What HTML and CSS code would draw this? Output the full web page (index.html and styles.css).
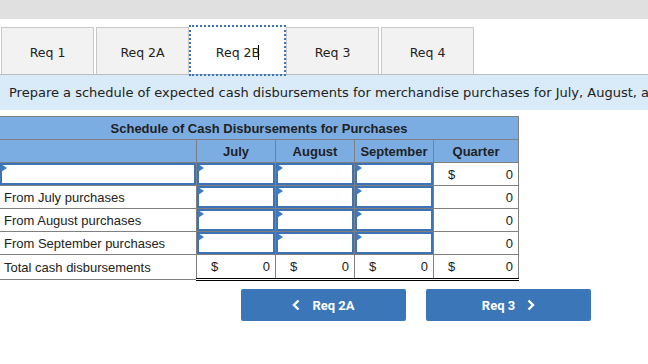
FILE: index.html
```html
<!DOCTYPE html>
<html>
<head>
<meta charset="utf-8">
<link rel="stylesheet" href="styles.css">
</head>
<body>
<div class="topbar"></div>
<div class="tabs">
  <div class="tab">Req 1</div>
  <div class="tab">Req 2A</div>
  <div class="tab active">Req 2B<span class="caret"></span></div>
  <div class="tab">Req 3</div>
  <div class="tab">Req 4</div>
</div>
<div class="band">Prepare a schedule of expected cash disbursements for merchandise purchases for July, August, and September, and for the quarter in total.</div>
<table class="sched">
  <colgroup>
    <col class="c-label"><col class="c-m"><col class="c-m"><col class="c-m"><col class="c-q">
  </colgroup>
  <tr class="hd"><th colspan="5">Schedule of Cash Disbursements for Purchases</th></tr>
  <tr class="hd"><th></th><th>July</th><th>August</th><th>September</th><th>Quarter</th></tr>
  <tr>
    <td class="inp"><div class="box"></div><span class="tri"></span></td>
    <td class="inp"><div class="box"></div><span class="tri"></span></td>
    <td class="inp"><div class="box"></div><span class="tri"></span></td>
    <td class="inp"><div class="box"></div><span class="tri"></span></td>
    <td class="val"><span class="dol">$</span><span class="num">0</span></td>
  </tr>
  <tr>
    <td class="lbl">From July purchases</td>
    <td class="inp"><div class="box"></div><span class="tri"></span></td>
    <td class="inp"><div class="box"></div><span class="tri"></span></td>
    <td class="inp"><div class="box"></div><span class="tri"></span></td>
    <td class="val"><span class="dol"></span><span class="num">0</span></td>
  </tr>
  <tr>
    <td class="lbl">From August purchases</td>
    <td class="inp"><div class="box"></div><span class="tri"></span></td>
    <td class="inp"><div class="box"></div><span class="tri"></span></td>
    <td class="inp"><div class="box"></div><span class="tri"></span></td>
    <td class="val"><span class="dol"></span><span class="num">0</span></td>
  </tr>
  <tr>
    <td class="lbl">From September purchases</td>
    <td class="inp"><div class="box"></div><span class="tri"></span></td>
    <td class="inp"><div class="box"></div><span class="tri"></span></td>
    <td class="inp"><div class="box"></div><span class="tri"></span></td>
    <td class="val"><span class="dol"></span><span class="num">0</span></td>
  </tr>
  <tr class="total">
    <td class="lbl">Total cash disbursements</td>
    <td class="val"><span class="dol">$</span><span class="num">0</span></td>
    <td class="val"><span class="dol">$</span><span class="num">0</span></td>
    <td class="val"><span class="dol">$</span><span class="num">0</span></td>
    <td class="val"><span class="dol">$</span><span class="num">0</span></td>
  </tr>
</table>
<div class="nav">
  <button class="btn"><svg class="chev" width="8" height="12" viewBox="0 0 8 12"><path d="M6.5 1.5 L2 6 L6.5 10.5" fill="none" stroke="#fff" stroke-width="2.4"/></svg><span>Req 2A</span></button>
  <button class="btn"><span>Req 3</span><svg class="chev" width="8" height="12" viewBox="0 0 8 12"><path d="M1.5 1.5 L6 6 L1.5 10.5" fill="none" stroke="#fff" stroke-width="2.4"/></svg></button>
</div>
</body>
</html>
```

FILE: styles.css
```css
html, body {
  margin: 0;
  padding: 0;
  background: #fff;
  width: 648px;
  height: 364px;
  overflow: hidden;
}
body {
  font-family: "Liberation Sans", Arial, sans-serif;
  color: #1a1a1a;
}
.topbar {
  height: 19px;
  background: #e0e0e0;
}
.tabs {
  display: flex;
  gap: 2px;
  margin-top: 8px;
  padding-left: 1px;
  height: 47px;
}
.tab {
  box-sizing: border-box;
  width: 93px;
  height: 47px;
  border: 1px solid #c8c8c8;
  border-bottom: none;
  background: #f2f2f2;
  display: flex;
  align-items: center;
  justify-content: center;
  font-family: "DejaVu Sans", Verdana, sans-serif;
  font-size: 12.5px;
  color: #222;
  padding-top: 3px;
}
.tab.active {
  background: #fff;
  border-color: #fff;
  outline: 2px dotted #3a73b8;
  position: relative;
  z-index: 1;
}
.caret {
  display: inline-block;
  width: 1px;
  height: 15px;
  background: #000;
  margin-left: -2px;
}
.band {
  border-top: 1px solid #bdbdbd;
  background: #d9eaf8;
  height: 35px;
  line-height: 36px;
  padding-left: 9px;
  font-family: "DejaVu Sans", Verdana, sans-serif;
  font-size: 13px;
  color: #222;
  white-space: nowrap;
  overflow: hidden;
}
.sched {
  margin-top: 6px;
  margin-left: -1px;
  border-collapse: collapse;
  table-layout: fixed;
  width: 519px;
  font-size: 13px;
}
.c-label { width: 197px; }
.c-m { width: 79px; }
.c-q { width: 85px; }
.sched th, .sched td {
  border: 1px solid #808080;
  height: 22px;
  padding: 0;
}
.hd th {
  background: #7badE3;
  font-weight: bold;
  text-align: center;
  color: #1f1f1f;
}
.lbl {
  padding-left: 4px !important;
  color: #222;
  white-space: nowrap;
}
.inp {
  position: relative;
}
.box {
  box-sizing: border-box;
  height: 22px;
  border: 2px solid #3c72b6;
  background: #fff;
}
.tri {
  position: absolute;
  left: 1px;
  top: 1px;
  width: 0;
  height: 0;
  border-top: 4px solid transparent;
  border-bottom: 4px solid transparent;
  border-left: 6px solid #3f7bc4;
}
.val {
  white-space: nowrap;
}
.val .dol {
  display: inline-block;
  width: 30px;
  padding-left: 14px;
  box-sizing: border-box;
}
.val .num {
  float: right;
  padding-right: 5px;
}
.total td {
  height: 23px;
}
.total .val {
  border-top: 1px solid #000;
  border-bottom: 3px double #000;
}
.nav {
  display: flex;
  gap: 20px;
  padding-left: 241px;
  margin-top: 8px;
}
.btn {
  width: 165px;
  height: 32px;
  border: none;
  border-radius: 2px;
  background: #3a76b8;
  color: #fff;
  font-family: Roboto, "Liberation Sans", sans-serif;
  font-weight: bold;
  font-size: 13px;
  display: flex;
  align-items: center;
  justify-content: center;
  gap: 12px;
  padding: 0;
}
```
